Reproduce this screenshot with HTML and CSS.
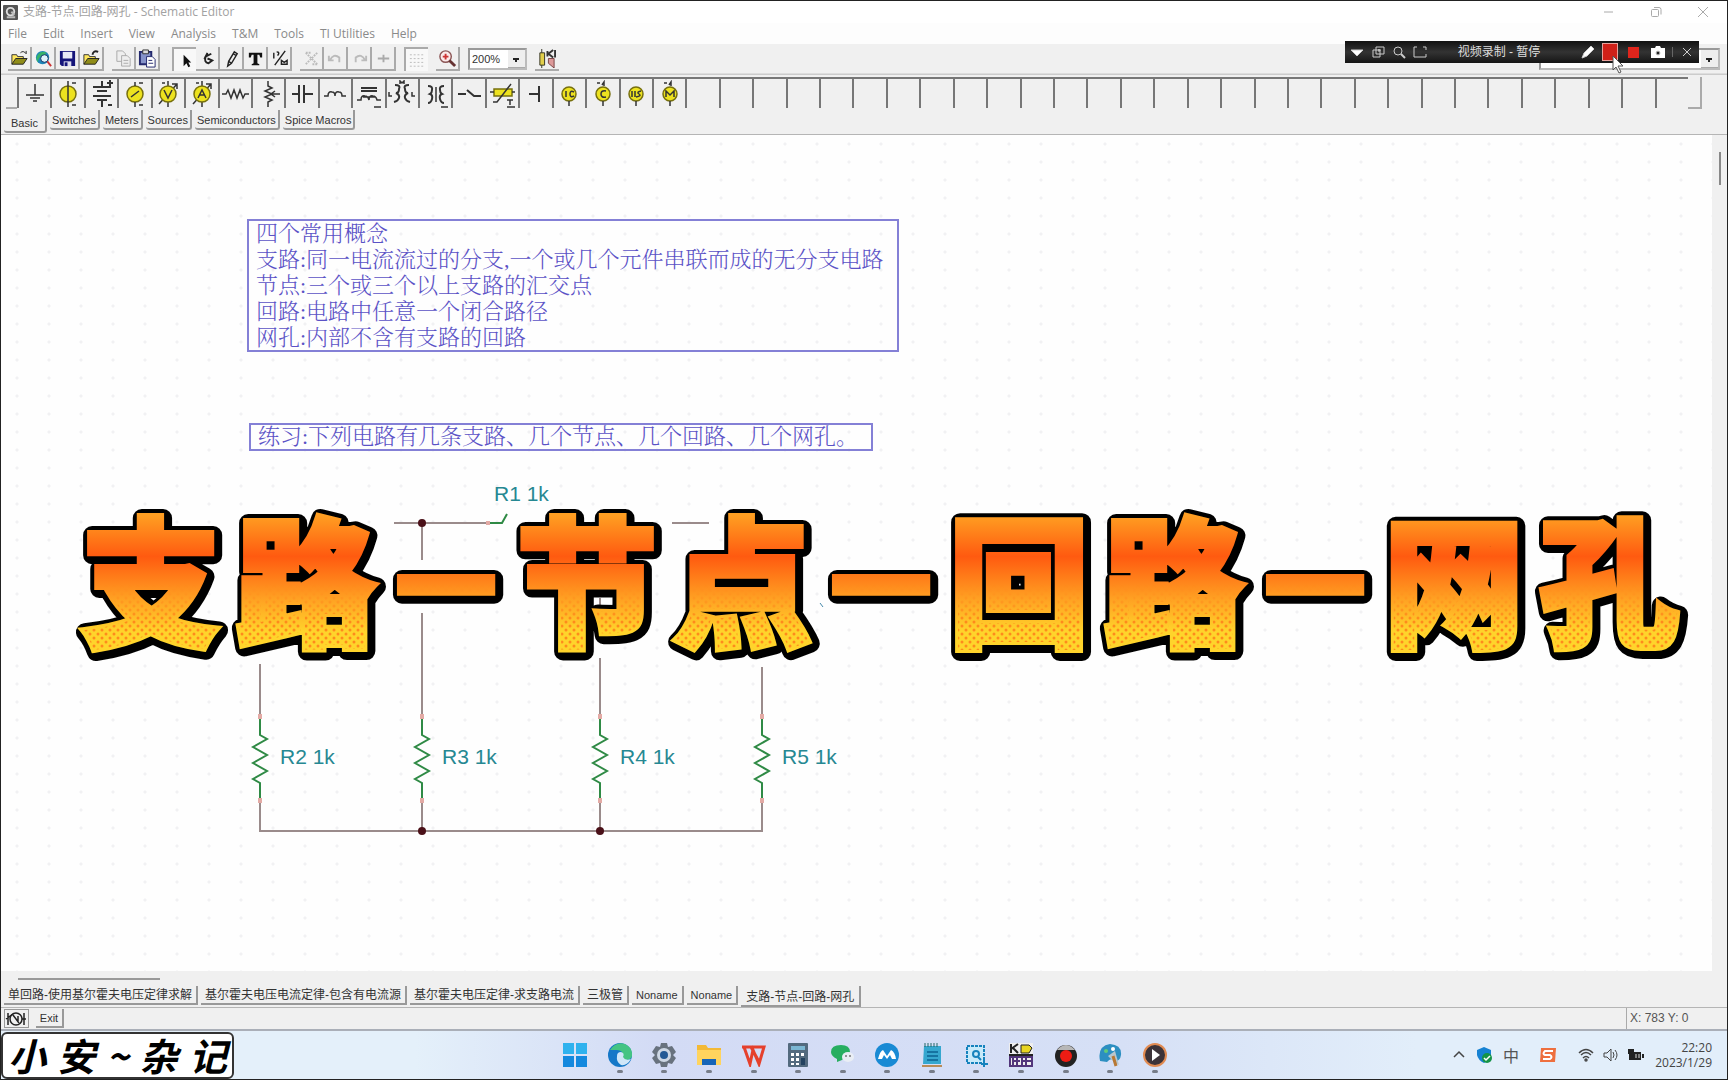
FILE: index.html
```html
<!DOCTYPE html>
<html lang="zh-CN">
<head>
<meta charset="utf-8">
<title>支路-节点-回路-网孔 - Schematic Editor</title>
<link rel="stylesheet" href="styles.css">
</head>
<body>
<header class="titlebar">
  <svg class="app-icon" viewBox="0 0 16 16"><rect width="16" height="16" rx="1" fill="#555"/><circle cx="8" cy="7" r="4" fill="none" stroke="#ddd" stroke-width="2"/><path d="M4 13h9M9 7l3 4" stroke="#bbb" stroke-width="2"/></svg>
  <h1>支路-节点-回路-网孔 - Schematic Editor</h1>
  <div class="win-controls">
    <button aria-label="Minimize"><svg viewBox="0 0 12 12"><path d="M1 6h9"/></svg></button>
    <button aria-label="Restore"><svg viewBox="0 0 12 12"><rect x="1.500" y="3.500" width="7" height="7" rx="1"/><path d="M4 1.500h5q2 0 2 2v5"/></svg></button>
    <button aria-label="Close"><svg viewBox="0 0 12 12"><path d="M1 1l10 10M11 1L1 11"/></svg></button>
  </div>
</header>
<nav class="menubar">
  <a href="#">File</a><a href="#">Edit</a><a href="#">Insert</a><a href="#">View</a><a href="#">Analysis</a><a href="#">T&amp;M</a><a href="#">Tools</a><a href="#">TI Utilities</a><a href="#">Help</a>
</nav>

<div class="toolbar">
  <div class="group">
    <button aria-label="Open"><svg viewBox="0 0 20 20"><path d="M2 16V6h5l1 2h6v3" fill="#ffe75c" stroke="#333"/><path d="M2 16l4-6h12l-4 6z" fill="#8f8c18" stroke="#222"/><path d="M11 4q3-3 6 1v-3" fill="none" stroke="#222"/></svg></button>
    <button aria-label="Open from web"><svg viewBox="0 0 20 20"><circle cx="9" cy="9" r="7" fill="#1f86b8"/><path d="M4 6q4-5 9-2-2 4-5 4t-4 6q-3-4 0-8z" fill="#36b36b"/><circle cx="11" cy="10" r="4" fill="#dff4fb" stroke="#136"/><path d="M14 13l4 5" stroke="#c33" stroke-width="2"/></svg></button>
    <button aria-label="Save"><svg viewBox="0 0 20 20"><path d="M2 2h16v16H4l-2-2z" fill="#15157a"/><path d="M5 3h10v7H5z" fill="#e8eaf6"/><path d="M6 13h8v5H6z" fill="#dde"/><path d="M7 14h3v4H7z" fill="#15157a"/></svg></button>
    <button aria-label="Close file"><svg viewBox="0 0 20 20"><path d="M2 16V6h5l1 2h6v3" fill="#ffe75c" stroke="#333"/><path d="M2 16l4-6h12l-4 6z" fill="#8f8c18" stroke="#222"/><path d="M17 3q-5-2-6 3" fill="none" stroke="#222" stroke-width="2"/></svg></button>
  </div>
  <div class="group">
    <button aria-label="Copy"><svg viewBox="0 0 20 20" fill="#eee" stroke="#aaa"><path d="M3 2h6l3 3v8H3z"/><path d="M8 7h6l3 3v8H8zM10 12h5M10 15h5"/></svg></button>
    <button aria-label="Paste"><svg viewBox="0 0 20 20"><path d="M2 3h12v13H2z" fill="#8693c9" stroke="#23286d" stroke-width="2"/><path d="M5 1h6v4H5z" fill="#ddd" stroke="#333"/><path d="M9 8h6l3 3v8H9z" fill="#fff" stroke="#23286d"/><path d="M11 12h4M11 15h5" stroke="#23286d"/></svg></button>
  </div>
  <div class="group wide-gap">
    <button class="pressed" aria-label="Select"><svg viewBox="0 0 20 20"><path d="M8 4v12l3-3 2 4 2-1-2-4h3z" fill="#111"/></svg></button>
    <button aria-label="Last component"><svg viewBox="0 0 20 20" fill="none" stroke="#222" stroke-width="2"><path d="M14 5l-6 3 2-4M8 8q-2 6 3 7l4-3-5-2"/></svg></button>
    <button aria-label="Wire"><svg viewBox="0 0 20 20" fill="none" stroke="#222"><path d="M13 3l3 2-6 10-4 3 1-5zM12 5l3 2M7 13l3 2" stroke-width="1.500"/></svg></button>
    <button aria-label="Text"><svg viewBox="0 0 20 20"><path d="M3 4h14v5h-2l-1-3h-2v9l2 1v1H6v-1l2-1V6H6L5 9H3z" fill="#111"/></svg></button>
    <button aria-label="Hide values"><svg viewBox="0 0 20 20" fill="none" stroke="#222" stroke-width="1.500"><path d="M4 4v6M7 3q4 0 1 4M16 2L5 17M12 12v4h6v-4l-3 2z"/></svg></button>
  </div>
  <div class="group">
    <button aria-label="Cut"><svg viewBox="0 0 20 20" fill="none" stroke="#bbb" stroke-width="2" stroke-dasharray="2 1"><path d="M4 16L16 4M4 4l12 12M4 4h5M11 16h5"/></svg></button>
    <button aria-label="Undo"><svg viewBox="0 0 20 20" fill="none" stroke="#bbb" stroke-width="2"><path d="M4 12q4-8 10-3v5M3 7v5h5"/></svg></button>
    <button aria-label="Redo"><svg viewBox="0 0 20 20" fill="none" stroke="#bbb" stroke-width="2"><path d="M16 12q-4-8-10-3v5M17 7v5h-5"/></svg></button>
    <button aria-label="Move"><svg viewBox="0 0 20 20" fill="none" stroke="#aaa" stroke-width="2"><path d="M4 10h12M10 6v8"/></svg></button>
  </div>
  <div class="group">
    <button class="pressed" aria-label="Grid"><svg viewBox="0 0 20 20" stroke="#bbb" stroke-dasharray="2 2"><path d="M2 4h16M2 8h16M2 12h16M2 16h16"/></svg></button>
  </div>
  <div class="group">
    <button aria-label="Zoom"><svg viewBox="0 0 20 20" fill="none"><circle cx="8" cy="8" r="6" fill="#fbeaea" stroke="#8b5555" stroke-width="1.500"/><path d="M8 5v6M5 8h6" stroke="#c33" stroke-width="2"/><path d="M12 12l6 6" stroke="#633" stroke-width="3"/></svg></button>
  </div>
  <select class="zoom" aria-label="Zoom level"><option>200%</option></select>
  <div class="group">
    <button class="plain" aria-label="Interactive mode"><svg viewBox="0 0 20 20"><path d="M3 4h5v13H3z" fill="#e2cf4b" stroke="#332"/><path d="M5 0v4M5 17v3" stroke="#332"/><path d="M11 2v6M12 5l5-4M12 5l5 4M19 1v8" stroke="#333" stroke-width="2"/><path d="M12 10v5l6 5V10z" fill="#d99" stroke="#744"/></svg></button>
  </div>
  <select class="finder" aria-label="Find component"><option></option></select>
</div>

<div class="parts">
  <span class="handle"></span>
  <div class="slots">
    <button aria-label="Ground"><svg viewBox="0 0 28 28"><path d="M14 4v11M5 15h18M9 18h10M12 21h4"/></svg></button>
    <button aria-label="Voltage source"><svg viewBox="0 0 28 28"><circle class="y" cx="14" cy="14" r="8"/><path d="M14 1v26M18 3h4M18 25h4"/></svg></button>
    <button aria-label="Battery"><svg viewBox="0 0 28 28"><path d="M14 1v5M14 21v6M5 7h18M9 11h10M5 16h18M9 20h10M19 3h6M22 0v6M20 25h4" stroke-width="2"/></svg></button>
    <button aria-label="Generator"><svg viewBox="0 0 28 28"><circle class="y" cx="14" cy="14" r="8"/><path d="M14 2v4M14 22v5M10 17l8-6M18 3h4M18 25h4"/></svg></button>
    <button aria-label="Voltmeter"><svg viewBox="0 0 28 28"><path d="M5 24L23 4M18 4h5v5M14 1v26M8 3h3"/><circle class="y" cx="14" cy="14" r="8"/><path d="M10 10l4 8 4-8"/></svg></button>
    <button aria-label="Ammeter"><svg viewBox="0 0 28 28"><path d="M5 24L23 4M18 4h5v5M14 1v26M8 3h3"/><circle class="y" cx="14" cy="14" r="8"/><path d="M10 18l4-8 4 8M12 15h4"/></svg></button>
    <button aria-label="Resistor"><svg viewBox="0 0 28 28"><path d="M1 14h4l2-4 3 8 3-8 3 8 3-8 3 8 2-4h4"/></svg></button>
    <button aria-label="Potentiometer"><svg viewBox="0 0 28 28"><path d="M13 1v5l4 2-7 3 7 3-7 3 7 3-4 2v5M25 14h-8M20 11l-4 3 4 3"/></svg></button>
    <button aria-label="Capacitor"><svg viewBox="0 0 28 28"><path d="M4 14h7M17 14h8M11 5v18M16 5v18" stroke-width="2"/></svg></button>
    <button aria-label="Inductor"><svg viewBox="0 0 28 28"><path d="M3 16h4q0-5 4-4 3 0 3 4 0-5 4-4 3 0 3 4h4"/></svg></button>
    <button aria-label="Inductor with core"><svg viewBox="0 0 28 28"><path d="M6 8h16M6 11h16" stroke-width="2"/><path d="M2 20h4q0-5 4-4 3 0 4 4 0-5 4-4 3 0 4 4h4M8 17h12M19 27h7"/></svg></button>
    <button aria-label="Coupled inductors"><svg viewBox="0 0 28 28"><path d="M7 5q6 0 4 4 0 4-3 4 4 2 3 5t-5 4M21 5q-6 0-4 4 0 4 3 4-4 2-3 5t5 4" stroke-width="2"/><path d="M1 12v4h3M24 12v4h3M12 4V1l2 2 2-2v3"/></svg></button>
    <button aria-label="Transformer"><svg viewBox="0 0 28 28"><path d="M6 6q5 0 4 4 0 3-2 4 3 1 2 5t-4 4M22 6q-5 0-4 4 0 3 2 4-3 1-2 5t4 4" stroke-width="2"/><path d="M14 7v15M19 27h7"/></svg></button>
    <button aria-label="Switch"><svg viewBox="0 0 28 28"><path d="M3 14h8M12 10l7 6h7" stroke-width="2"/></svg></button>
    <button aria-label="Controlled switch"><svg viewBox="0 0 28 28"><rect class="y" x="5" y="9" width="18" height="7"/><path d="M4 22h4L22 4M18 20h6M21 20v5M18 27h8M1 12h4M23 12h3"/></svg></button>
    <button aria-label="Jumper"><svg viewBox="0 0 28 28"><path d="M7 14h9M17 6v16" stroke-width="2"/></svg></button>
    <button aria-label="Voltage controlled source"><svg viewBox="0 0 28 28"><circle class="y" cx="14" cy="14" r="7"/><path d="M14 21v5M11 11v6M19 12q-4-2-4 2t4 2"/></svg></button>
    <button aria-label="Current controlled source"><svg viewBox="0 0 28 28"><circle class="y" cx="14" cy="14" r="7"/><path d="M14 21v5M8 3h3M13 5l2-3v4M17 11q-5-1-5 3t5 3"/></svg></button>
    <button aria-label="Dependent source"><svg viewBox="0 0 28 28"><circle class="y" cx="14" cy="14" r="7"/><path d="M14 21v5M10 11v6M13 11v6M19 11q-5 1-2 3t-3 3"/></svg></button>
    <button aria-label="Dependent meter"><svg viewBox="0 0 28 28"><circle class="y" cx="14" cy="14" r="7"/><path d="M14 21v5M8 3h3M13 5l2-3v4M10 17v-6l4 4 4-4v6"/></svg></button>
    <i></i><i></i><i></i><i></i><i></i><i></i><i></i><i></i><i></i><i></i><i></i><i></i><i></i><i></i><i></i><i></i><i></i><i></i><i></i><i></i><i></i><i></i><i></i><i></i><i></i><i></i><i></i><i></i><i></i><i></i>
  </div>
  <span class="handle end"></span>
</div>
<div class="part-tabs">
  <button class="active">Basic</button><button>Switches</button><button>Meters</button><button>Sources</button><button>Semiconductors</button><button>Spice Macros</button>
</div>

<main class="workspace">
  <section class="sheet">
    <svg class="drawing" width="1711" height="836" viewBox="1 135 1711 836">
      <defs>
        <linearGradient id="fire" gradientUnits="userSpaceOnUse" x1="0" y1="515" x2="0" y2="653">
          <stop offset="0" stop-color="#ff9f22"/><stop offset=".3" stop-color="#ff5a10"/><stop offset=".6" stop-color="#ff9f22"/><stop offset=".85" stop-color="#ffd42b"/>
        </linearGradient>
        <linearGradient id="fade" gradientUnits="userSpaceOnUse" x1="0" y1="585" x2="0" y2="653">
          <stop offset="0" stop-color="#000"/><stop offset=".5" stop-color="#fff"/>
        </linearGradient>
        <mask id="lower" maskUnits="userSpaceOnUse" x="60" y="500" width="1640" height="170"><rect x="60" y="500" width="1640" height="170" fill="url(#fade)"/></mask>
        <pattern id="dots" width="8" height="8" patternUnits="userSpaceOnUse"><circle cx="2" cy="2" r="1.500"/><circle cx="6" cy="6" r="1.500"/></pattern>
        <g id="resistor"><path class="lead" d="M0 0v18l7 4-14 8 14 8-14 8 14 8-14 8 7 4v17"/><path class="pin" d="M-2-3h4v5h-4zM-2 81h4v5h-4z"/></g>
      </defs>
      <g class="wire">
        <path d="M394 523h94M672 523h37M422 523v37M422 613v104M600 598v11M600 658v59M260 664v53M762 667v50"/>
        <path d="M260 800v31h502v-31M422 800v31M600 800v31"/>
      </g>
      <g class="joint"><circle cx="422" cy="523" r="4"/><circle cx="422" cy="831" r="4"/><circle cx="600" cy="831" r="4"/></g>
      <path class="lead" d="M488 523h14l5-9"/><path class="pin" d="M486 521h4v4h-4z"/>
      <path d="M820 603l3 4" stroke="#48a"/>
      <use href="#resistor" x="260" y="717"/><use href="#resistor" x="422" y="717"/><use href="#resistor" x="600" y="717"/><use href="#resistor" x="762" y="717"/>
      <g class="label"><text x="494" y="501">R1 1k</text><text x="280" y="764">R2 1k</text><text x="442" y="764">R3 1k</text><text x="620" y="764">R4 1k</text><text x="782" y="764">R5 1k</text></g>
      <g class="headline edge"><use href="#caption" x="2" y="2"/></g>
      <g class="headline face"><text id="caption" text-anchor="middle"><tspan x="151" y="636">支</tspan><tspan x="306" y="636">路</tspan><tspan class="dash" x="446" y="623">一</tspan><tspan x="587" y="636">节</tspan><tspan x="742" y="636">点</tspan><tspan class="dash" x="881" y="623">一</tspan><tspan x="1019" y="636">回</tspan><tspan x="1174" y="636">路</tspan><tspan class="dash" x="1315" y="623">一</tspan><tspan x="1454" y="636">网</tspan><tspan x="1609" y="636">孔</tspan></text></g>
      <g class="headline spots" mask="url(#lower)"><use href="#caption"/></g>
    </svg>
    <div class="note concepts">四个常用概念<br>支路:同一电流流过的分支,一个或几个元件串联而成的无分支电路<br>节点:三个或三个以上支路的汇交点<br>回路:电路中任意一个闭合路径<br>网孔:内部不含有支路的回路</div>
    <div class="note exercise">练习:下列电路有几条支路、几个节点、几个回路、几个网孔。</div>
  </section>
  <div class="vscroll"><span></span></div>
</main>

<div class="hscroll"><span></span></div>
<div class="sheet-tabs">
  <button>单回路-使用基尔霍夫电压定律求解</button><button>基尔霍夫电压电流定律-包含有电流源</button><button>基尔霍夫电压定律-求支路电流</button><button>三极管</button><button class="latin">Noname</button><button class="latin">Noname</button><button class="active">支路-节点-回路-网孔</button>
</div>
<div class="statusbar">
  <button class="sim" aria-label="Simulate"><svg viewBox="0 0 22 16" fill="none" stroke="#222" stroke-width="1.500"><circle cx="11" cy="8" r="6"/><path d="M3 2v12M1 8l7-5M8 4l6 8M13 5v6M19 2v12M17 8h4"/></svg></button>
  <button class="exit">Exit</button>
  <span class="coords">X: 783 Y: 0</span>
</div>

<footer class="taskbar">
  <div class="brand"><span>小</span><span>安</span><span>~</span><span>杂</span><span>记</span></div>
  <div class="apps">
    <button aria-label="Start"><svg viewBox="0 0 24 24" fill="#1489de"><path d="M0 0h11v11H0zM13 0h11v11H13z" fill="#2fb2ee"/><path d="M0 13h11v11H0zM13 13h11v11H13z"/></svg></button>
    <button class="on" aria-label="Edge"><svg viewBox="0 0 24 24"><circle cx="12" cy="12" r="12" fill="#1578c8"/><path d="M2 7Q8-2 17 1q8 4 7 12-1 4-6 4-5-1-3-4 0-6-6-6-4 0-7 0z" fill="#44c483"/><path d="M9 13q0-4 4-4 4 1 2 5 2 4 8 2-4 7-10 6-5-3-4-9z" fill="#cfe6f8"/></svg></button>
    <button class="on" aria-label="Settings"><svg viewBox="0 0 24 24"><path d="M9 0h6l1 4 4-1 4 6-3 3 3 3-4 6-4-1-1 4H9l-1-4-4 1-4-6 3-3-3-3 4-6 4 1z" fill="#68727e"/><circle cx="12" cy="12" r="7" fill="#cdd7e4"/><circle cx="12" cy="12" r="4" fill="#245a95"/></svg></button>
    <button class="on" aria-label="Files"><svg viewBox="0 0 24 24"><path d="M0 2h9l2 3h13v17H0z" fill="#f3b936"/><path d="M0 7h24v15H0z" fill="#ffd45e"/><path d="M5 22v-6h14v6z" fill="#1765b8"/></svg></button>
    <button class="on" aria-label="WPS"><svg viewBox="0 0 24 24" fill="none" stroke="#e5402c" stroke-width="3"><path d="M0 4h22l-5 17-6-14-3 14L2 4M9 4l7 13"/></svg></button>
    <button class="on" aria-label="Calculator"><svg viewBox="0 0 24 24"><rect x="2" width="20" height="24" rx="1" fill="#536a7e"/><path d="M5 3h14v4H5z" fill="#7bb7d3"/><path d="M5 10h3v3H5zM10 10h3v3h-3zM15 10h3v3h-3zM5 15h3v3H5zM10 15h3v3h-3zM5 20h3v2H5zM10 20h3v2h-3z" fill="#fff"/><path d="M15 15h4v7h-4z" fill="#24425f"/></svg></button>
    <button class="on" aria-label="WeChat"><svg viewBox="0 0 24 24"><path d="M10 2q9 0 9 7l-8 8-5 2v-3q-6-3-6-7 0-7 10-7z" fill="#27ae60"/><ellipse cx="17" cy="14" rx="6" ry="5" fill="#e9eef5"/><circle cx="15" cy="13" r="1" fill="#777"/><circle cx="19" cy="13" r="1" fill="#777"/></svg></button>
    <button class="on" aria-label="Mail"><svg viewBox="0 0 24 24"><circle cx="12" cy="12" r="12" fill="#198ad4"/><path d="M3 16q2-8 5-9l4 6 4-6q4 2 5 9h-4l-2-4-3 4-3-4-2 4z" fill="#fff"/></svg></button>
    <button class="on" aria-label="Notepad"><svg viewBox="0 0 24 24"><path d="M4 3h17v18H3z" fill="#36a7cf"/><path d="M5 0v4M8 0v4M11 0v4M14 0v4M17 0v4" stroke="#266"/><path d="M7 9h11M7 13h11M7 17h11" stroke="#1673a1" stroke-width="2"/><path d="M2 23h20" stroke="#b98b57" stroke-width="2"/></svg></button>
    <button class="on" aria-label="Snip"><svg viewBox="0 0 24 24" fill="none" stroke="#1683bd" stroke-width="2"><rect x="3" y="3" width="17" height="17" fill="#c8eafa" stroke-dasharray="3 1"/><circle cx="12" cy="11" r="3"/><path d="M14 14l3 3M20 17v7M17 21h7"/></svg></button>
    <button class="on" aria-label="TINA"><svg viewBox="0 0 24 24"><path d="M0 0h24v24H0z" fill="#eee"/><path d="M2 1v9M2 6l7-5M4 5l5 5M0 12h24" stroke="#222" stroke-width="2"/><path d="M12 2h8l3 3-3 5h-8z" fill="#e8d522" stroke="#222"/><path d="M1 14h22v9H1zM4 14v9M8 14v9M4 18h7M13 14v9M17 14v9M13 18h9" fill="none" stroke="#52367b" stroke-width="2"/></svg></button>
    <button class="on" aria-label="Recorder"><svg viewBox="0 0 24 24"><circle cx="12" cy="13" r="11" fill="#222"/><path d="M3 7q9-10 18 0" fill="#b7b7b7"/><circle cx="12" cy="13" r="6" fill="#ed1c14"/></svg></button>
    <button class="on" aria-label="Paint"><svg viewBox="0 0 24 24"><path d="M2 18Q-1 3 12 1q12 1 11 11-1 7-7 6-3-4-7 1z" fill="#2d8fc1"/><circle cx="8" cy="8" r="2" fill="#61cb77"/><circle cx="15" cy="6" r="2" fill="#fff"/><path d="M10 13l7-5 4 14-4-2z" fill="#b8c7ce"/><path d="M15 13l3 10" stroke="#b87834" stroke-width="3"/></svg></button>
    <button class="on" aria-label="Player"><svg viewBox="0 0 24 24"><circle cx="12" cy="12" r="11" fill="#3c3338" stroke="#e18b52" stroke-width="2"/><path d="M9 6l8 6-8 6z" fill="#fff"/></svg></button>
  </div>
  <div class="tray">
    <svg viewBox="0 0 16 16" fill="none" stroke="#444" stroke-width="1.500"><path d="M3 10l5-5 5 5"/></svg>
    <svg viewBox="0 0 16 16"><path d="M8 0l7 3v5q-1 5-7 8-6-3-7-8V3z" fill="#1682d3"/><circle cx="11" cy="11" r="5" fill="#159447"/><path d="M8 11l2 2 4-4" fill="none" stroke="#fff" stroke-width="1.500"/></svg>
    <span class="ime">中</span>
    <svg viewBox="0 0 16 16"><path d="M1 1h15l-1 14H0z" fill="#ee6f3e"/><path d="M13 4H5q-3 3 0 4h5q3 2 0 4H3" fill="none" stroke="#fff" stroke-width="2"/></svg>
    <svg class="net" viewBox="0 0 16 16" fill="none" stroke="#444" stroke-width="1.500"><path d="M1 6q7-7 14 0M3 8q5-5 10 0M5 11q3-3 6 0"/><circle cx="8" cy="13" r="1"/></svg>
    <svg viewBox="0 0 16 16" fill="none" stroke="#444"><path d="M1 6h3l4-4v12l-4-4H1zM10 5q2 3 0 6M12 3q4 5 0 10"/></svg>
    <svg viewBox="0 0 16 16"><path d="M1 5h12v8H1z" fill="#222"/><path d="M14 7h2v4h-2zM0 2h6v5H0z" fill="#222"/><path d="M8 7v4M11 7v4" stroke="#ddd"/></svg>
    <div class="clock">22:20<br>2023/1/29</div>
  </div>
</footer>

<div class="recorder">
  <svg viewBox="0 0 14 14"><path d="M1 5h12l-6 6z" fill="#fff"/></svg>
  <svg viewBox="0 0 14 14"><path d="M5 2h8v7H5zM2 5h7v7H2zM7 5h3M8 4v3"/></svg>
  <svg viewBox="0 0 14 14"><circle cx="6" cy="6" r="4"/><path d="M9 9l4 4" stroke-width="2"/></svg>
  <svg viewBox="0 0 14 14"><path d="M1 5V2h3M10 2h3v3M13 9v3h-3M4 12H1V9M1 5v4M4 12h6"/></svg>
  <span class="rec-title">视频录制 - 暂停</span>
  <svg viewBox="0 0 14 14"><path d="M1 13l2-5 7-7 3 3-7 7z" fill="#fff"/></svg>
  <button class="rec-pause" aria-label="Pause"></button>
  <button class="rec-stop" aria-label="Stop"></button>
  <svg viewBox="0 0 14 14"><path d="M0 3h4l1-2h4l1 2h4v10H0z" fill="#fff" stroke="none"/><circle cx="7" cy="8" r="2" fill="#222"/></svg>
  <i></i>
  <svg viewBox="0 0 14 14"><path d="M3 3l8 8M11 3l-8 8"/></svg>
  <svg class="pointer" viewBox="0 0 12 18"><path d="M1 0v14l3-3 3 6 2-1-3-6h5z" fill="#fff" stroke="#555"/></svg>
</div>
</body>
</html>
```
FILE: styles.css
```css
* { box-sizing: border-box; }
body {
  margin: 0;
  min-height: 100vh;
  display: flex;
  flex-direction: column;
  border: 1px solid #222;
  background: #f0f0f0;
  color: #333;
  font: 12px/16px "Liberation Sans", "Noto Sans CJK SC", sans-serif;
  overflow: hidden;
  position: relative;
}
button { font: inherit; color: inherit; background: none; border: 0; padding: 0; margin: 0; }
svg { display: block; }

.titlebar { display: flex; align-items: center; gap: 5px; height: 22px; padding: 0 18px 0 2px; background: #fff; }
.app-icon { width: 15px; height: 15px; }
.titlebar h1 { margin: 0; font: 12px/16px "Open Sans", "Noto Sans CJK SC", sans-serif; color: #a2a2a2; flex: 1; }
.win-controls { display: flex; gap: 35px; }
.win-controls svg { width: 12px; height: 12px; fill: none; stroke: #aaa; }

.menubar { display: flex; gap: 16px; height: 21px; padding: 3px 7px; background: #fdfdfd; font-family: "Open Sans", sans-serif; }
.menubar a { color: #8a8a8a; text-decoration: none; }

.toolbar { display: flex; align-items: center; gap: 8px; height: 30px; padding: 0 7px; border-bottom: 1px solid #ddd; }
.group { display: flex; }
.wide-gap { margin-left: 4px; }
.toolbar button { width: 24px; height: 24px; padding: 2px; border: solid #aaa; border-width: 0 2px 2px 0; }
.toolbar button.pressed { border-width: 2px 0 0 2px; background: #f8f8f8; }
.toolbar button.plain { border-right: 0; }
.toolbar button svg { width: 19px; height: 19px; }
.toolbar select {
  appearance: none;
  height: 22px;
  border: 2px solid #999;
  border-right-color: #bbb;
  border-bottom-color: #bbb;
  border-radius: 0;
  padding: 0 2px;
  color: #333;
  font: 12px/16px "Liberation Sans", sans-serif;
  background: linear-gradient(#222, #222) right 6px center / 6px 2px no-repeat, linear-gradient(#222, #222) right 8px top 10px / 2px 2px no-repeat, linear-gradient(90deg, #aaa, #aaa) right 0 bottom / 17px 1px no-repeat, linear-gradient(#eee, #eee) right / 17px 100% no-repeat, #fff;
}
.toolbar .zoom { width: 59px; font-size: 11px; }
.finder { width: 181px; margin-left: auto; }

.parts { display: flex; height: 34px; padding: 2px 25px 0 5px; border-top: 1px solid #ccc; }
.handle { width: 11px; height: 32px; border: solid #aaa; border-width: 0 0 2px 0; }
.handle.end { width: 14px; border-width: 0 2px 2px 0; }
.slots { flex: 1; display: grid; grid-template-columns: repeat(50, 1fr); border-top: 2px solid #777; }
.slots > * { border-left: 2px solid #777; display: flex; align-items: center; justify-content: center; }
.slots svg { width: 28px; height: 28px; fill: none; stroke: #333; stroke-width: 1.5; }
.slots .y { fill: #ede21f; stroke: #77700e; }

.part-tabs { display: flex; align-items: flex-start; gap: 3px; height: 27px; padding: 2px 3px; border-bottom: 1px solid #b5b5b5; font-size: 11px; }
.part-tabs button { height: 20px; padding: 2px 2px 0; border: solid #999; border-width: 0 2px 2px 0; border-radius: 0 0 3px 3px; }
.part-tabs .active { height: 23px; padding: 4px 7px 0; }

.workspace { flex: 1; display: flex; background: #fff; min-height: 0; }
.sheet { flex: 1; position: relative; overflow: hidden; background: radial-gradient(circle, #f1f1f3 1px, transparent 2px) 0 0 / 32px 18px #fefefe; }
.drawing { display: block; }
.note { position: absolute; border: 2px solid #8480d6; padding: 0 7px; color: #5b52c6; font: 22px/26px "Liberation Serif", "Noto Serif CJK SC", "Noto Sans CJK SC", serif; font-weight: 300; white-space: nowrap; }
.concepts { left: 246px; top: 84px; width: 652px; height: 133px; line-height: 26px; }
.exercise { left: 248px; top: 288px; width: 624px; height: 28px; line-height: 24px; }
.wire { fill: none; stroke: #9a8b8b; stroke-width: 2; }
.joint { fill: #4a1018; }
.lead { fill: none; stroke: #2f8a45; stroke-width: 2; }
.pin { fill: #e3aaa5; }
.label { fill: #268892; font: 21px "Liberation Sans", sans-serif; }
.headline { font: 900 140px "Noto Sans CJK SC", sans-serif; stroke-linejoin: round; }
.dash { font-size: 99px; }
.edge { fill: #000; stroke: #000; stroke-width: 18px; }
.face { fill: url(#fire); stroke: url(#fire); stroke-width: 6px; stroke-linejoin: miter; }
.spots { fill: url(#dots); }
#dots { fill: #ff8a1c; }

.vscroll { width: 15px; background: #f0f0f0; padding: 17px 7px; }
.vscroll span { display: block; width: 2px; height: 33px; background: #888; }
.hscroll { height: 14px; padding: 7px 17px; }
.hscroll span { display: block; width: 142px; height: 2px; background: #999; }

.sheet-tabs { display: flex; align-items: flex-start; gap: 3px; height: 23px; padding: 1px 3px; border-bottom: 1px solid #b5b5b5; white-space: nowrap; }
.sheet-tabs button { height: 19px; padding: 0 4px; border: solid #999; border-width: 0 2px 2px 0; }
.sheet-tabs .latin { font-size: 11px; }
.sheet-tabs .active { height: 21px; padding: 2px 5px 0; }

.statusbar { display: flex; align-items: center; gap: 7px; height: 23px; padding: 0 0 0 3px; border-bottom: 2px solid #aaafb8; }
.sim { width: 25px; height: 19px; border: 1px solid #999; }
.sim svg { width: 22px; height: 16px; }
.exit { width: 28px; height: 19px; border: solid #999; border-width: 0 2px 2px 0; font-size: 11px; }
.coords { margin-left: auto; width: 101px; height: 21px; line-height: 20px; padding-left: 3px; border-left: 1px solid #aaa; color: #555; }

.taskbar { display: flex; align-items: center; height: 48px; background: linear-gradient(90deg, #e4f0fa 24%, #d3dbf5 38%, #d6e0f6 65%, #e2eefa 82%); }
.brand { display: flex; align-items: center; justify-content: space-between; width: 233px; height: 47px; padding: 0 5px; border: 2px solid #333; border-radius: 6px; background: #fff; color: #000; font: italic bold 38px/40px "Noto Sans CJK SC", sans-serif; }
.apps { display: grid; grid-template-columns: repeat(14, 1fr); width: 624px; margin: 0 auto 0 319px; }
.apps button { display: flex; flex-direction: column; align-items: center; gap: 3px; height: 40px; padding-top: 8px; }
.apps svg { width: 24px; height: 24px; }
.apps .on::after { content: ""; width: 6px; height: 3px; border-radius: 2px; background: #777d89; }
.tray { display: flex; align-items: center; gap: 9px; padding-right: 15px; }
.tray svg { width: 16px; height: 16px; }
.ime { font: 16px/20px "Noto Sans CJK SC", sans-serif; color: #555; margin: 0 12px 0 2px; }
.tray .net { margin-left: 13px; }
.clock { text-align: right; font: 12px/15px "Open Sans", sans-serif; color: #444; width: 59px; }

.recorder { position: absolute; top: 40px; right: 28px; display: flex; align-items: center; gap: 7px; width: 354px; height: 22px; padding: 0 5px; background: linear-gradient(#111, #333 50%, #151515); }
.recorder svg { width: 14px; height: 14px; fill: none; stroke: #ccc; }
.rec-title { flex: 1; text-align: center; color: #ddd; padding-right: 10px; }
.rec-pause { width: 16px; height: 18px; border: 1px solid #e9a09a; background: #d02018; }
.rec-stop { width: 11px; height: 11px; background: #e0251c; margin: 0 5px 0 3px; }
.recorder i { width: 1px; height: 10px; background: #666; }
.recorder .pointer { position: absolute; left: 267px; top: 15px; width: 12px; height: 18px; }
```
